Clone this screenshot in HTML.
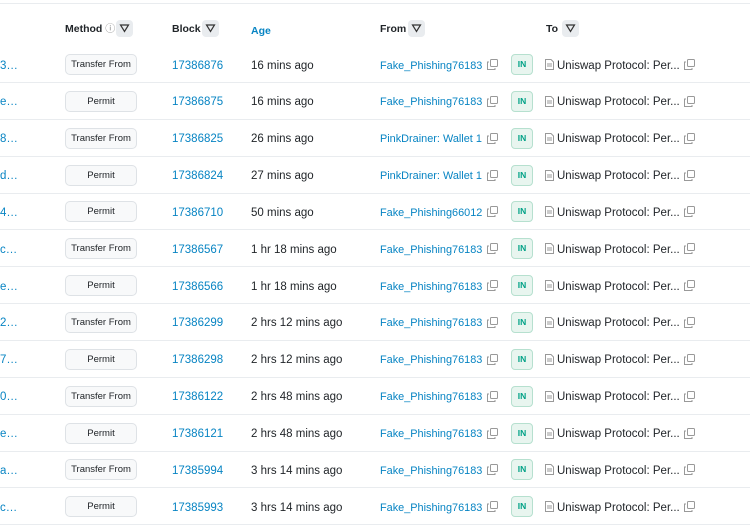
<!DOCTYPE html><html><head><meta charset="utf-8"><style>
body{margin:0;width:750px;height:522px;overflow:hidden;background:#fff;font-family:"Liberation Sans",sans-serif;font-size:11.5px;color:#212529;position:relative}
.a{position:absolute;white-space:nowrap;line-height:14px}
.ln{color:#0784c3}
.hd{font-weight:bold;font-size:10.5px}
.fb{position:absolute;width:17px;height:17px;background:#e9ecef;border-radius:4px}
.m{position:absolute;left:65px;width:70px;height:19px;border:1px solid #dee2e6;background:#f8f9fa;border-radius:5px;font-size:9.5px;text-align:center;line-height:19px}
.in{position:absolute;left:511px;width:20px;height:19px;border:1px solid #b6e0cf;background:#e8f5ef;color:#00a186;border-radius:4px;font-size:8.5px;font-weight:bold;text-align:center;line-height:19px}
.row{position:absolute;left:0;width:750px;height:36px;border-bottom:1px solid #e9ecef}
svg{display:block}
</style></head><body>
<div class="a" style="top:3px;left:0;width:750px;border-top:1px solid #e9ecef"></div>
<div class="a hd" style="left:65px;top:22px">Method <span style="font-weight:normal;color:#888;font-size:10px">ⓘ</span></div>
<div class="fb" style="left:116px;top:20px"></div>
<div class="a hd" style="left:172px;top:22px">Block</div>
<div class="fb" style="left:202px;top:20px"></div>
<div class="a hd" style="left:251px;top:24px;color:#0784c3">Age</div>
<div class="a hd" style="left:380px;top:22px">From</div>
<div class="fb" style="left:408px;top:20px"></div>
<div class="a hd" style="left:546px;top:22px">To</div>
<div class="fb" style="left:562px;top:20px"></div>
<svg class="a" style="left:116px;top:20px" width="17" height="17"><path d="M4.5 5h8l-4 6.5z" fill="none" stroke="#333" stroke-width="1.2"/></svg>
<svg class="a" style="left:202px;top:20px" width="17" height="17"><path d="M4.5 5h8l-4 6.5z" fill="none" stroke="#333" stroke-width="1.2"/></svg>
<svg class="a" style="left:408px;top:20px" width="17" height="17"><path d="M4.5 5h8l-4 6.5z" fill="none" stroke="#333" stroke-width="1.2"/></svg>
<svg class="a" style="left:562px;top:20px" width="17" height="17"><path d="M4.5 5h8l-4 6.5z" fill="none" stroke="#333" stroke-width="1.2"/></svg>
<div id="rows"></div>
<script>
var d=[["3…","Transfer From","17386876","16 mins ago","Fake_Phishing76183"],
["e…","Permit","17386875","16 mins ago","Fake_Phishing76183"],
["8…","Transfer From","17386825","26 mins ago","PinkDrainer: Wallet 1"],
["d…","Permit","17386824","27 mins ago","PinkDrainer: Wallet 1"],
["4…","Permit","17386710","50 mins ago","Fake_Phishing66012"],
["c…","Transfer From","17386567","1 hr 18 mins ago","Fake_Phishing76183"],
["e…","Permit","17386566","1 hr 18 mins ago","Fake_Phishing76183"],
["2…","Transfer From","17386299","2 hrs 12 mins ago","Fake_Phishing76183"],
["7…","Permit","17386298","2 hrs 12 mins ago","Fake_Phishing76183"],
["0…","Transfer From","17386122","2 hrs 48 mins ago","Fake_Phishing76183"],
["e…","Permit","17386121","2 hrs 48 mins ago","Fake_Phishing76183"],
["a…","Transfer From","17385994","3 hrs 14 mins ago","Fake_Phishing76183"],
["c…","Permit","17385993","3 hrs 14 mins ago","Fake_Phishing76183"]];
var cp='<svg width="11" height="11" viewBox="0 0 11 11"><rect x="3.5" y="0.5" width="7" height="7" rx="1" fill="none" stroke="#999"/><path d="M2 3H0.5v7.5H8V9" fill="none" stroke="#999"/></svg>';
var h='';
d.forEach(function(r,i){var t=46+i*36.85;
h+='<div class="row" style="top:'+t+'px"></div>';
h+='<div class="a ln" style="left:0;top:'+(t+12.5)+'px">'+r[0]+'</div>';
h+='<div class="m" style="top:'+(t+8)+'px">'+r[1]+'</div>';
h+='<div class="a ln" style="left:172px;top:'+(t+12.5)+'px">'+r[2]+'</div>';
h+='<div class="a" style="left:251px;top:'+(t+12.5)+'px">'+r[3]+'</div>';
h+='<div class="a ln" style="left:380px;top:'+(t+12.5)+'px;font-size:10.9px">'+r[4]+'</div>';
h+='<div class="a" style="left:487px;top:'+(t+13)+'px">'+cp+'</div>';
h+='<div class="in" style="top:'+(t+8)+'px">IN</div>';
h+='<div class="a" style="left:545px;top:'+(t+13)+'px"><svg width="9" height="11" viewBox="0 0 9 11"><path d="M.5.5h5.5l2.5 2.5v7.5h-8z M2 5h5M2 7h5" fill="none" stroke="#999"/></svg></div>';
h+='<div class="a" style="left:557px;top:'+(t+12.5)+'px">Uniswap Protocol: Per...</div>';
h+='<div class="a" style="left:684px;top:'+(t+13)+'px">'+cp+'</div>';});
document.getElementById('rows').innerHTML=h;
</script>
</body></html>
